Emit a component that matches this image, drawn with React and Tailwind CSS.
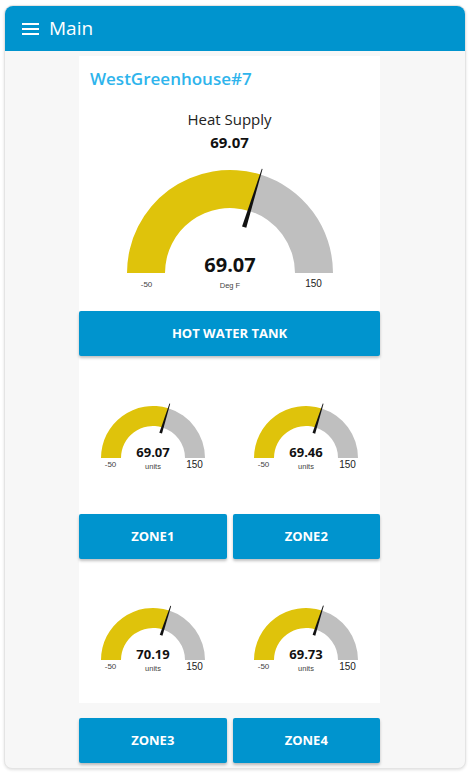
import React from 'react';

const FONT = { fontFamily: '"Open Sans", "Noto Sans", sans-serif' };

// point on a half-circle, angle measured from the left end (0) to the right end (180)
function pt(cx, cy, rad, deg) {
  const a = (deg * Math.PI) / 180;
  return [cx - rad * Math.cos(a), cy - rad * Math.sin(a)];
}

function sector(cx, cy, R, r, from, to) {
  const [x1, y1] = pt(cx, cy, R, from);
  const [x2, y2] = pt(cx, cy, R, to);
  const [x3, y3] = pt(cx, cy, r, to);
  const [x4, y4] = pt(cx, cy, r, from);
  return `M${x1} ${y1} A${R} ${R} 0 0 1 ${x2} ${y2} L${x3} ${y3} A${r} ${r} 0 0 0 ${x4} ${y4} Z`;
}

function needle(cx, cy, base, tip, deg, w) {
  const a = (deg * Math.PI) / 180;
  const [bx, by] = pt(cx, cy, base, deg);
  const [tx, ty] = pt(cx, cy, tip, deg);
  // perpendicular
  const px = Math.sin(a);
  const py = -Math.cos(a);
  return `M${bx + px * w} ${by + py * w} L${tx + px * 0.4} ${ty + py * 0.4} L${tx - px * 0.4} ${ty - py * 0.4} L${bx - px * w} ${by - py * w} Z`;
}

function Gauge({ value, unit, size }) {
  const big = size === 'big';
  const W = big ? 260 : 130;
  const H = big ? 135 : 76;
  const cx = W / 2;
  const cy = big ? 113 : 60;
  const R = big ? 103 : 52;
  const r = big ? 65 : 32;
  const deg = ((value + 50) / 200) * 180;
  return (
    <svg width={W} height={H} viewBox={`0 0 ${W} ${H}`} className="block mx-auto">
      <path d={sector(cx, cy, R, r, 0, deg)} fill="#dfc30b" />
      <path d={sector(cx, cy, R, r, deg, 180)} fill="#bfbfbf" />
      <path
        d={needle(cx, cy, big ? 48 : 26, big ? 109 : 57, deg, big ? 2.2 : 1.4)}
        fill="#111"
      />
      <text
        x={cx}
        y={big ? 112 : 59}
        textAnchor="middle"
        fontSize={big ? 20 : 13}
        fontWeight="700"
        fill="#111"
        style={FONT}
      >
        {value.toFixed(2)}
      </text>
      <text
        x={cx}
        y={big ? 128 : 71}
        textAnchor="middle"
        fontSize="7.5"
        fill="#444"
        style={{ fontFamily: '"Liberation Sans", Arial, sans-serif' }}
      >
        {unit}
      </text>
      <text
        x={big ? 46.5 : 22.5}
        y={big ? 127 : 69}
        textAnchor="middle"
        fontSize="8"
        fill="#444"
        style={{ fontFamily: '"Liberation Sans", Arial, sans-serif' }}
      >
        -50
      </text>
      <text
        x={big ? 213.5 : 106.5}
        y={big ? 127 : 70}
        textAnchor="middle"
        fontSize="10"
        fill="#222"
        style={{ fontFamily: '"Liberation Sans", Arial, sans-serif' }}
      >
        150
      </text>
    </svg>
  );
}

function Btn({ children }) {
  return (
    <button
      type="button"
      className="flex-1 h-[45px] bg-[#0094ce] text-white text-[13px] font-bold rounded-[2px] shadow-[0_2px_3px_rgba(0,0,0,0.25)] flex items-center justify-center"
    >
      {children}
    </button>
  );
}

export default function App() {
  return (
    <div className="w-[474px] h-[773px] bg-white pt-[5px] pl-[4px]" style={FONT}>
      <div className="w-[462px] rounded-t-[9px] rounded-b-[8px] border border-[#e4e4e4] bg-[#f7f7f7] shadow-[0_1px_3px_rgba(0,0,0,0.12)] overflow-hidden">
        {/* Toolbar */}
        <div className="h-[45px] bg-[#0094ce] flex items-center pl-[17px] gap-[10px] text-white">
          <svg width="17" height="12" viewBox="0 0 17 12">
            <rect x="0" y="0" width="17" height="2" fill="#fff" />
            <rect x="0" y="5" width="17" height="2" fill="#fff" />
            <rect x="0" y="10" width="17" height="2" fill="#fff" />
          </svg>
          <span className="text-[19px] leading-none">Main</span>
        </div>

        {/* Content */}
        <div className="pl-[74px] pt-[5px] pb-[5px]">
          <div className="w-[301px]">
            <div className="bg-white pb-[27px]">
              <div className="h-[46px] pt-[12px] pl-[11px] leading-[22px] text-[17px] font-semibold text-[#2eb4ec]">
                WestGreenhouse#7
              </div>
              <div className="h-[34px] leading-[34px] text-center text-[15px] text-[#222]">
                Heat Supply
              </div>
              <div className="h-[12px] leading-[12px] text-center text-[15px] font-bold text-[#111]">
                69.07
              </div>
              <div className="mt-[12px]">
                <Gauge value={69.07} unit="Deg F" size="big" />
              </div>
              <div className="mt-[16px] flex">
                <Btn>HOT WATER TANK</Btn>
              </div>

              <div className="mt-[42px] flex gap-[6px]">
                <div className="flex-1">
                  <Gauge value={69.07} unit="units" />
                </div>
                <div className="flex-1">
                  <Gauge value={69.46} unit="units" />
                </div>
              </div>
              <div className="mt-[40px] flex gap-[6px]">
                <Btn>ZONE1</Btn>
                <Btn>ZONE2</Btn>
              </div>

              <div className="mt-[41px] flex gap-[6px]">
                <div className="flex-1">
                  <Gauge value={70.19} unit="units" />
                </div>
                <div className="flex-1">
                  <Gauge value={69.73} unit="units" />
                </div>
              </div>
            </div>
            <div className="mt-[15px] flex gap-[6px]">
              <Btn>ZONE3</Btn>
              <Btn>ZONE4</Btn>
            </div>
          </div>
        </div>
      </div>
    </div>
  );
}
